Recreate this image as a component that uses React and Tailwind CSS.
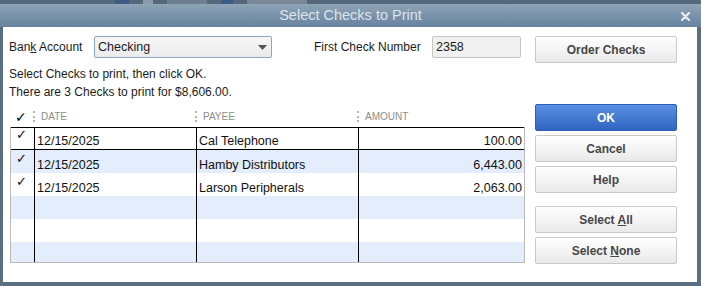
import { ChevronDown } from "lucide-react";

const rows = [
  { date: "12/15/2025", payee: "Cal Telephone", amount: "100.00" },
  { date: "12/15/2025", payee: "Hamby Distributors", amount: "6,443.00" },
  { date: "12/15/2025", payee: "Larson Peripherals", amount: "2,063.00" },
  null,
  null,
  null,
];

function Btn({ children, primary, className = "" }) {
  return (
    <button
      className={
        "h-[27px] w-full rounded-[2px] border text-[12px] font-bold " +
        (primary
          ? "border-[#2c5db8] bg-gradient-to-b from-[#5c90e2] to-[#2f64c3] text-white "
          : "border-[#c9c9c9] bg-gradient-to-b from-[#ffffff] to-[#e9e9e9] text-[#474747] ") +
        className
      }
    >
      {children}
    </button>
  );
}

function HeadSep() {
  return <span className="h-[11px] border-l-2 border-dotted border-[#b4b4b4]" />;
}

export default function App() {
  return (
    <div className="w-[701px] h-[286px] overflow-hidden flex flex-col bg-[#54687b] font-['Liberation_Sans',Arial,sans-serif]">
      {/* strip of the window behind */}
      <div className="h-[4px] flex gap-[14px] pl-[115px] bg-[#56697c]">
        <span className="w-[14px] bg-[#3e5a86]" />
        <span className="w-[10px] bg-[#8b9aa8]" />
        <span className="w-[40px] bg-[#6e7f8f]" />
        <span className="w-[12px] bg-[#3e5a86]" />
        <span className="w-[60px] bg-[#7a8896]" />
      </div>

      <div className="flex-1 flex flex-col border-l-[3px] border-r-[4px] border-b-[4px] border-[#5a6f82]">
        {/* title bar */}
        <div className="h-[23px] -ml-[3px] -mr-[4px] flex items-center justify-center relative bg-gradient-to-b from-[#8ea3b5] to-[#6883a0]">
          <span className="text-[14.5px] text-[#dde4ea]">Select Checks to Print</span>
          <svg className="absolute right-[11px] top-[8px]" width="9" height="9" viewBox="0 0 9 9">
            <path d="M1 1 L8 8 M8 1 L1 8" stroke="#e3e9ee" strokeWidth="2.4" strokeLinecap="round" />
          </svg>
        </div>

        {/* body */}
        <div className="flex-1 bg-white flex pl-[7px] text-[12px] text-[#1b1b1b]">
          <div className="w-[515px] flex flex-col">
            <div className="mt-[9px] h-[22px] flex items-center">
              <span className="w-[85px] -ml-px">
                Ban<span className="underline">k</span> Account
              </span>
              <div className="w-[178px] h-[22px] rounded-[2px] border border-[#8aa6c4] bg-gradient-to-b from-[#f7f7f7] to-[#ebebeb] flex items-center justify-between pl-[3px] pr-[4px] text-[12.5px]">
                <span>Checking</span>
                <svg width="9" height="5" viewBox="0 0 9 5">
                  <path d="M0 0 H9 L4.5 5 Z" fill="#555" />
                </svg>
              </div>
              <span className="ml-[42px] w-[118px]">First Check Number</span>
              <div className="w-[89px] h-[22px] rounded-[2px] border border-[#c4c4c4] bg-[#f0f0f0] flex items-center pl-[3px] text-[12.5px]">
                2358
              </div>
            </div>
            <div className="mt-[7px] h-[18px] leading-[18px] -ml-px">Select Checks to print, then click OK.</div>
            <div className="h-[19px] leading-[19px] -ml-px">There are 3 Checks to print for $8,606.00.</div>

            {/* header */}
            <div className="mt-[4px] h-[21px] flex items-center text-[10px] text-[#8c8c8c]">
              <span className="w-[23px] pl-[5px] text-[14px] leading-none text-black font-['DejaVu_Sans',sans-serif] font-bold">✓</span>
              <div className="w-[162px] flex items-center gap-[6px]">
                <HeadSep />
                <span>DATE</span>
              </div>
              <div className="w-[162px] flex items-center gap-[6px]">
                <HeadSep />
                <span>PAYEE</span>
              </div>
              <div className="flex-1 flex items-center gap-[6px]">
                <HeadSep />
                <span>AMOUNT</span>
              </div>
            </div>

            {/* table */}
            <div className="h-[136px] overflow-hidden border-x border-b border-[#b9b9b9] text-[12.5px] text-[#111]">
              {rows.map((r, i) => (
                <div
                  key={i}
                  className={
                    "h-[23px] flex items-stretch " +
                    (i === 0 ? "-mx-px border border-black " : "") +
                    (i % 2 === 1 ? "bg-[#e3edfb]" : "bg-white")
                  }
                >
                  <div className="w-[23px] flex items-end pb-[5px] pl-[5px] text-[13px] font-['DejaVu_Sans',sans-serif]">
                    {r ? "✓" : ""}
                  </div>
                  <div className="w-[162px] border-l border-black flex items-end pl-[2px] leading-[15px]">
                    {r ? r.date : ""}
                  </div>
                  <div className="w-[162px] border-l border-black flex items-end pl-[2px] leading-[15px]">
                    {r ? r.payee : ""}
                  </div>
                  <div className="flex-1 border-l border-black flex items-end justify-end pr-[2px] leading-[15px]">
                    {r ? r.amount : ""}
                  </div>
                </div>
              ))}
            </div>
          </div>

          {/* buttons */}
          <div className="ml-[10px] w-[142px] flex flex-col">
            <Btn className="mt-[9px]">Order Checks</Btn>
            <Btn primary className="mt-[41px]">OK</Btn>
            <Btn className="mt-[4px]">Cancel</Btn>
            <Btn className="mt-[4px]">Help</Btn>
            <Btn className="mt-[13px]">
              Select <span className="underline">A</span>ll
            </Btn>
            <Btn className="mt-[4px]">
              Select <span className="underline">N</span>one
            </Btn>
          </div>
        </div>
      </div>
    </div>
  );
}
